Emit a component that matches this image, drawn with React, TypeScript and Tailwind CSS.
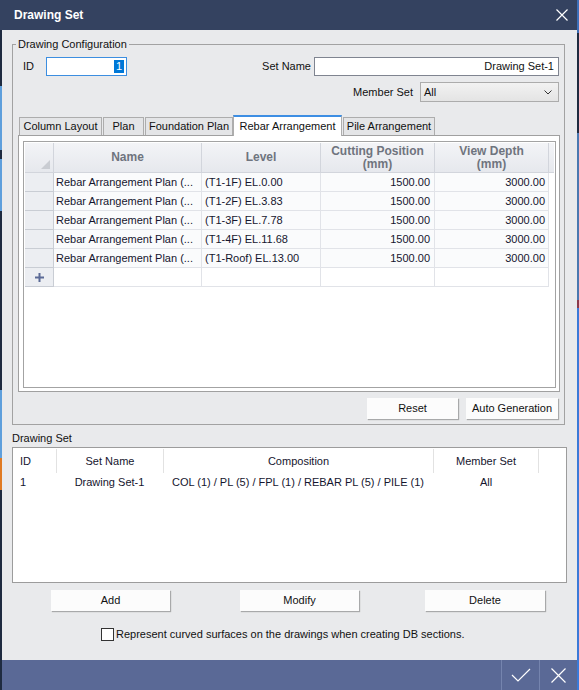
import React from 'react';

const levels = [
  '(T1-1F) EL.0.00',
  '(T1-2F) EL.3.83',
  '(T1-3F) EL.7.78',
  '(T1-4F) EL.11.68',
  '(T1-Roof) EL.13.00',
];

const tabs = [
  { label: 'Column Layout', w: 'w-[83px]' },
  { label: 'Plan', w: 'w-[41px]' },
  { label: 'Foundation Plan', w: 'w-[88px]' },
  { label: 'Rebar Arrangement', w: 'w-[109px]', active: true },
  { label: 'Pile Arrangement', w: 'w-[92px]' },
];

function Button({ label, w }: { label: string; w: string }) {
  return (
    <div
      className={`${w} h-[21px] flex items-center justify-center bg-[#fcfcfc] shadow-[1px_1px_1px_rgba(0,0,0,0.28)] text-[#111]`}
    >
      {label}
    </div>
  );
}

function HeaderCell({ children, last }: { children?: React.ReactNode; last?: boolean }) {
  return (
    <div
      className={`flex flex-col items-center justify-center leading-[13px] text-[12px] font-bold text-[#6f747e] bg-gradient-to-b from-[#f3f4f7] to-[#e6e8ed] border-b border-[#d2d5dc] ${last ? '' : 'border-r'}`}
    >
      {children}
    </div>
  );
}

function RebarGrid() {
  return (
    <div className="flex-1 border border-[#a3a3a3] bg-white p-px">
      <div className="grid grid-cols-[29px_148px_119px_114px_114px_1fr] grid-rows-[30px_repeat(6,19px)] text-[11px] text-[#15152e]">
        <div className="bg-gradient-to-b from-[#f3f4f7] to-[#e6e8ed] border-r border-b border-[#d2d5dc] flex items-end justify-end p-[3px]">
          <svg width="9" height="9" viewBox="0 0 9 9">
            <polygon points="9,0 9,9 0,9" fill="#c9ccd2" />
          </svg>
        </div>
        <HeaderCell>Name</HeaderCell>
        <HeaderCell>Level</HeaderCell>
        <HeaderCell>
          <span>Cutting Position</span>
          <span>(mm)</span>
        </HeaderCell>
        <HeaderCell>
          <span>View Depth</span>
          <span>(mm)</span>
        </HeaderCell>
        <HeaderCell last />
        {levels.map(level => (
          <React.Fragment key={level}>
            <div className="bg-[#eceef2] border-r border-b border-[#c9cdd4]" />
            <div className="bg-[#fafbfc] border-r border-b border-[#e1e3e8] pl-[2px] flex items-center whitespace-nowrap overflow-hidden">
              Rebar Arrangement Plan (...
            </div>
            <div className="bg-[#fafbfc] border-r border-b border-[#e1e3e8] pl-[3px] flex items-center whitespace-nowrap">
              {level}
            </div>
            <div className="bg-[#fafbfc] border-r border-b border-[#e1e3e8] pr-[4px] flex items-center justify-end">
              1500.00
            </div>
            <div className="bg-[#fafbfc] border-r border-b border-[#e1e3e8] pr-[3px] flex items-center justify-end">
              3000.00
            </div>
            <div />
          </React.Fragment>
        ))}
        <div className="bg-[#eceef2] border-r border-b border-[#c9cdd4] flex items-center justify-center">
          <svg width="9" height="9" viewBox="0 0 9 9">
            <path d="M4.5 0v9M0 4.5h9" stroke="#5b6a96" strokeWidth="2" />
          </svg>
        </div>
        <div className="bg-white border-r border-b border-[#e1e3e8]" />
        <div className="bg-white border-r border-b border-[#e1e3e8]" />
        <div className="bg-white border-r border-b border-[#e1e3e8]" />
        <div className="bg-white border-r border-b border-[#e1e3e8]" />
        <div />
      </div>
    </div>
  );
}

function LeftStrip() {
  return (
    <div className="w-[2px] flex flex-col bg-[#1f2b40]">
      <div className="h-[56px]" />
      <div className="h-[64px] bg-[#5e9fdc]" />
      <div className="h-[9px]" />
      <div className="h-[52px] bg-[#5e9fdc]" />
      <div className="h-[179px]" />
      <div className="h-[68px] bg-[#5e9fdc]" />
      <div className="h-[32px] bg-[#e07a22]" />
    </div>
  );
}

function RightStrip() {
  return (
    <div className="w-[2px] flex flex-col bg-[#3b7ad8]">
      <div className="h-[33px] bg-[#3d6fb8]" />
      <div className="h-[100px] bg-[#1f2b40]" />
      <div className="h-[167px] bg-[#4a78b0]" />
      <div className="h-[8px] bg-[#8a3b4c]" />
      <div className="flex-1" />
    </div>
  );
}

export default function App() {
  return (
    <div className="w-[579px] h-[690px] flex overflow-hidden font-['Liberation_Sans',Arial,sans-serif] text-[11px] text-[#111]">
      <div className="flex-1 flex flex-col">
        <div className="h-[30px] shrink-0 bg-[#344260] flex items-center justify-between pl-[14px] pr-[9px]">
          <span className="text-white font-bold text-[12px]">Drawing Set</span>
          <svg width="12" height="12" viewBox="0 0 12 12">
            <path d="M0.5 0.5l11 11M11.5 0.5l-11 11" stroke="#fff" strokeWidth="1.2" />
          </svg>
        </div>

        <div className="flex flex-1 min-h-0">
          <LeftStrip />
          <div className="flex-1 flex flex-col bg-[#e9eaec]">
            <div className="flex-1 flex flex-col">
              <fieldset className="mt-[7px] ml-[10px] w-[553px] border border-[#a2a2a2] pt-[6px] pb-[5px]">
                <legend className="ml-[3px] px-[2px] leading-[14px]">Drawing Configuration</legend>

                <div className="flex items-center h-[19px] pr-[5px]">
                  <span className="ml-[10px] w-[23px]">ID</span>
                  <div className="w-[81px] h-[19px] border border-[#3c8ee0] bg-white flex items-center justify-end pr-[2px]">
                    <span className="bg-[#0078d7] text-white px-[2px] leading-[13px]">1</span>
                  </div>
                  <div className="flex-1 flex items-center justify-end">
                    <span className="mr-[3px]">Set Name</span>
                    <div className="w-[245px] h-[19px] border border-[#7f8490] bg-white flex items-center justify-end pr-[4px]">
                      Drawing Set-1
                    </div>
                  </div>
                </div>

                <div className="mt-[6px] flex items-center justify-end h-[20px] pr-[5px]">
                  <span className="mr-[7px]">Member Set</span>
                  <div className="w-[139px] h-[20px] border border-[#acacac] bg-gradient-to-b from-[#f2f2f2] to-[#e4e4e4] flex items-center justify-between pl-[3px] pr-[6px]">
                    <span>All</span>
                    <svg width="8" height="5" viewBox="0 0 8 5">
                      <path d="M0.5 0.5l3.5 3.5l3.5-3.5" stroke="#333" strokeWidth="1" fill="none" />
                    </svg>
                  </div>
                </div>

                <div className="mt-[13px] ml-[6px] flex items-end h-[20px] gap-px">
                  {tabs.map(tab =>
                    tab.active ? (
                      <div
                        key={tab.label}
                        className={`${tab.w} -ml-px h-[21px] -mb-px relative z-10 bg-white border-x border-[#adadad] border-t-2 border-t-[#3d8ee3] flex items-center justify-center`}
                      >
                        {tab.label}
                      </div>
                    ) : (
                      <div
                        key={tab.label}
                        className={`${tab.w} h-[18px] bg-[#e4e5e7] border border-b-0 border-[#adadad] flex items-center justify-center`}
                      >
                        {tab.label}
                      </div>
                    )
                  )}
                </div>

                <div className="ml-[5px] w-[542px] h-[257px] border border-[#a0a0a0] bg-white pt-[5px] pl-[4px] pr-[3px] pb-[3px] flex">
                  <RebarGrid />
                </div>

                <div className="mt-[6px] flex justify-end gap-[8px] pr-[6px]">
                  <Button label="Reset" w="w-[91px]" />
                  <Button label="Auto Generation" w="w-[92px]" />
                </div>
              </fieldset>

              <div className="mt-[6px] ml-[10px] leading-[14px]">Drawing Set</div>
              <div className="mt-[2px] ml-[10px] w-[555px] h-[136px] border border-[#9c9c9c] bg-white text-[#15152e]">
                <div className="grid grid-cols-[43px_107px_270px_106px] h-[24px] mt-px">
                  <div className="flex items-center pl-[7px]">ID</div>
                  <div className="flex items-center justify-center border-l border-[#e2e2e2]">Set Name</div>
                  <div className="flex items-center justify-center border-l border-[#e2e2e2]">Composition</div>
                  <div className="flex items-center justify-center border-x border-[#e2e2e2]">Member Set</div>
                </div>
                <div className="grid grid-cols-[43px_107px_270px_106px] h-[18px]">
                  <div className="flex items-center pl-[7px]">1</div>
                  <div className="flex items-center justify-center">Drawing Set-1</div>
                  <div className="flex items-center justify-center">COL (1) / PL (5) / FPL (1) / REBAR PL (5) / PILE (1)</div>
                  <div className="flex items-center justify-center">All</div>
                </div>
              </div>

              <div className="mt-[7px] flex">
                <div className="ml-[49px]">
                  <Button label="Add" w="w-[119px]" />
                </div>
                <div className="ml-[70px]">
                  <Button label="Modify" w="w-[119px]" />
                </div>
                <div className="ml-[66px]">
                  <Button label="Delete" w="w-[120px]" />
                </div>
              </div>

              <div className="mt-[17px] ml-[99px] flex items-center h-[13px]">
                <div className="w-[13px] h-[13px] border border-[#333] bg-white" />
                <span className="ml-[2px]">Represent curved surfaces on the drawings when creating DB sections.</span>
              </div>
            </div>

            <div className="h-[30px] shrink-0 bg-[#5a6996] flex justify-end">
              <div className="w-px bg-[#7584ae]" />
              <div className="w-[37px] flex items-center justify-center">
                <svg width="20" height="14" viewBox="0 0 20 14">
                  <polyline points="1,7 7,13 19,1" stroke="#fff" strokeWidth="1.2" fill="none" />
                </svg>
              </div>
              <div className="w-px bg-[#7584ae]" />
              <div className="w-[37px] flex items-center justify-center">
                <svg width="15" height="15" viewBox="0 0 15 15">
                  <path d="M0.5 0.5l14 14M14.5 0.5l-14 14" stroke="#fff" strokeWidth="1.2" />
                </svg>
              </div>
            </div>
          </div>
        </div>
      </div>
      <RightStrip />
    </div>
  );
}
